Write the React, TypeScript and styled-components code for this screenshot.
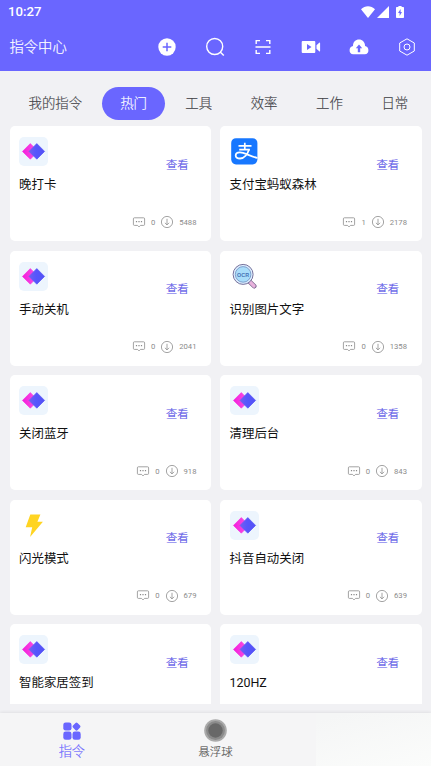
import React from 'react';
import styled, { createGlobalStyle, css } from 'styled-components';

const Global = createGlobalStyle`
  * { box-sizing: border-box; }
  body { margin: 0; background: #f1f1f4; font-family: Roboto, "Noto Sans CJK SC", sans-serif; }
  svg { display: block; flex: none; overflow: visible; }
`;

const purple = '#6a66ff';

const Screen = styled.div`
  width: 431px;
  height: 766px;
  overflow: hidden;
  display: flex;
  flex-direction: column;
  background: #f1f1f4;
`;

const Header = styled.header`
  height: 71px;
  flex: none;
  background: ${purple};
  color: #fff;
`;

const StatusBar = styled.div`
  height: 24px;
  display: flex;
  align-items: center;
  justify-content: space-between;
  padding: 0 27px 0 8px;
`;

const Clock = styled.span`
  font-size: 13.2px;
  font-weight: 500;
  line-height: 24px;
`;

const StatusIcons = styled.div`
  display: flex;
  align-items: center;
  padding-bottom: 1px;
`;

const Toolbar = styled.div`
  height: 46px;
  display: flex;
  align-items: center;
  justify-content: space-between;
  padding: 0 0 0 9.5px;
`;

const Heading = styled.h1`
  margin: 0;
  font-size: 14.3px;
  font-weight: 300;
  line-height: 20px;
  -webkit-text-stroke: 0.2px currentColor;
`;

const Actions = styled.div`
  display: flex;
  align-items: center;
`;

const Action = styled.button`
  width: 48px;
  height: 32px;
  padding: 0;
  border: 0;
  background: none;
  color: #fff;
  display: flex;
  align-items: center;
  justify-content: center;
`;

const Tabs = styled.nav`
  height: 55px;
  flex: none;
  display: flex;
  align-items: flex-start;
  padding: 16px 0 0 9.3px;
  overflow: hidden;
`;

const Tab = styled.span<{ $active?: boolean }>`
  height: 33px;
  line-height: 34px;
  flex: none;
  padding: 0 19.3px;
  font-size: 13.4px;
  font-weight: 300;
  color: #444449;
  -webkit-text-stroke: 0.15px currentColor;
  white-space: nowrap;
  ${p => p.$active && css`
    color: #fff;
    background: ${purple};
    border-radius: 17px;
    padding: 0 18.5px;
    margin: 0 0.6px 0 0.2px;
  `}
`;

const Grid = styled.main`
  height: 578px;
  flex: none;
  overflow: hidden;
  display: grid;
  grid-template-columns: 201.5px 201.5px;
  grid-auto-rows: 115px;
  gap: 9.5px 9px;
  padding: 0 9.5px;
`;

const Card = styled.article`
  background: #fff;
  border-radius: 5px;
  padding: 11px 14.5px 12.4px 9.5px;
  display: flex;
  flex-direction: column;
`;

const CardTop = styled.div`
  height: 55px;
  display: flex;
  justify-content: space-between;
  align-items: center;
`;

const CardInfo = styled.div`
  height: 55px;
  display: flex;
  flex-direction: column;
`;

const CardTitle = styled.h2`
  margin: 10px 0 0;
  font-size: 12.45px;
  font-weight: 400;
  line-height: 18px;
  color: #111;
  white-space: nowrap;
`;

const ViewLink = styled.span`
  font-size: 11.3px;
  font-weight: 300;
  line-height: 16px;
  color: #5550e6;
  margin-right: 8px;
  padding-top: 2px;
  -webkit-text-stroke: 0.2px currentColor;
`;

const Stats = styled.div`
  margin-top: auto;
  height: 13px;
  display: flex;
  align-items: center;
  justify-content: flex-end;
  gap: 6px;
  font-size: 7.7px;
  color: #8b8b8b;
`;

const BottomBar = styled.nav`
  height: 53.5px;
  margin-top: auto;
  flex: none;
  display: grid;
  grid-template-columns: repeat(3, 1fr);
  background: #f5f5f6;
  box-shadow: 0 -1px 3px rgba(0, 0, 0, 0.07);
`;

const BottomItem = styled.div<{ $active?: boolean }>`
  display: flex;
  flex-direction: column;
  align-items: center;
  padding-top: 7px;
  font-weight: 300;
  line-height: ${p => (p.$active ? '20px' : '21px')};
  font-size: ${p => (p.$active ? '13.2px' : '11.5px')};
  color: ${p => (p.$active ? purple : '#555')};
  -webkit-text-stroke: 0.15px currentColor;
`;

const BottomGlyph = styled.div`
  height: 22px;
  display: flex;
  align-items: center;
`;

const BottomFade = styled.div`
  margin-left: 29px;
  background: linear-gradient(165deg, #f5f6f6 10%, #fbfcfb);
`;

const Wifi = () => (
  <svg width="14" height="12" viewBox="0 0 14 12"><path d="M0 3.2C4-.8 10-.8 14 3.2L7 12Z" fill="#fff" /></svg>
);
const Signal = () => (
  <svg width="12" height="12" viewBox="0 0 12 12"><path d="M0 12 12 0V12Z" fill="#fff" /></svg>
);
const Battery = () => (
  <svg width="8" height="12" viewBox="0 0 8 12">
    <path d="M.8 1H2.4V0h3.2v1h1.6q.8 0 .8.8v9.4q0 .8-.8.8H.8Q0 12 0 11.2V1.8Q0 1 .8 1Z" fill="#fff" />
    <path d="M4.6 3 2 7h1.6v3L6 6H4.6Z" fill={purple} />
  </svg>
);
const StatusGap = styled.i<{ $w: number }>`
  width: ${p => p.$w}px;
`;

const PlusIcon = () => (
  <svg width="18" height="18" viewBox="0 0 18 18">
    <circle cx="9" cy="9" r="8.7" fill="#fff" />
    <path d="M9 4.7v8.6M4.7 9h8.6" stroke={purple} strokeWidth="1.5" />
  </svg>
);
const SearchIcon = () => (
  <svg width="20" height="20" viewBox="0 0 20 20" fill="none" stroke="#fff" strokeWidth="1.4">
    <circle cx="9.7" cy="9.5" r="8" /><path d="m15.2 15 3.6 3.6" />
  </svg>
);
const ScanIcon = () => (
  <svg width="16" height="16" viewBox="0 0 16 16" fill="none" stroke="#fff" strokeWidth="1.4">
    <path d="M1.2 5V1.6H5M11 1.6h3.8V5M1.2 11v3.4H5M11 14.4h3.8V11M.5 8h15" />
  </svg>
);
const VideoIcon = () => (
  <svg width="20" height="14" viewBox="0 0 20 14">
    <path d="M1.7 1h11.6q1 0 1 1v10q0 1-1 1H1.7q-1 0-1-1V2q0-1 1-1ZM15.5 5.3l2.7-2.5q.9-.6.9.5v7.4q0 1.1-.9.5l-2.7-2.5Z" fill="#fff" />
    <path d="m6 4 4.5 3L6 10Z" fill={purple} />
  </svg>
);
const CloudIcon = () => (
  <svg width="20" height="16" viewBox="0 0 20 16">
    <path d="M4.3 15.3A4.1 4.1 0 0 1 .6 11c0-2.4 1.6-3.8 3.4-4.1C4 3 6.6.6 10 .6s6 2.5 6.1 6.3c1.8.3 3.3 1.8 3.3 4.1a4.1 4.1 0 0 1-3.7 4.3Z" fill="#fff" />
    <path d="m10 5.6 3.2 3.7h-2v4H8.8v-4h-2Z" fill={purple} />
  </svg>
);
const SettingsIcon = () => (
  <svg width="18" height="18" viewBox="0 0 18 18" fill="none" stroke="#fff" strokeWidth="1" strokeLinejoin="round">
    <path d="M9 .8 16.3 5v8L9 17.2 1.7 13V5Z" /><circle cx="9" cy="9" r="3" />
  </svg>
);

const DiamondsIcon = () => (
  <svg width="29" height="29" viewBox="0 0 29 29">
    <defs>
      <linearGradient id="pinkFade"><stop offset="0" stopColor="#f51ddd" /><stop offset="1" stopColor="#f65be2" /></linearGradient>
      <linearGradient id="blueFade"><stop offset="0" stopColor="#7060ef" /><stop offset=".45" stopColor="#5755fc" /><stop offset="1" stopColor="#5452f5" /></linearGradient>
    </defs>
    <rect width="29" height="29" rx="5" fill="#edf5fd" />
    <path d="m11.3 6.6 7.8 7.8-7.8 7.8-7.8-7.8Z" fill="url(#pinkFade)" stroke="url(#pinkFade)" strokeWidth=".7" strokeLinejoin="round" />
    <path d="m17.8 6.6 7.8 7.8-7.8 7.8-7.8-7.8Z" fill="url(#blueFade)" stroke="url(#blueFade)" strokeWidth=".7" strokeLinejoin="round" />
  </svg>
);
const PayIcon = () => (
  <svg width="29" height="29" viewBox="0 0 29 29">
    <rect x="1.2" y="1.2" width="26.2" height="26.2" rx="4.8" fill="#1777ff" />
    <g fill="none" stroke="#fff">
      <path d="M8.5 8.8h13M14.8 5.8v6.5M9.2 12.6h10.6" strokeWidth="1.7" />
      <path d="M19.1 12.3c-1.4 4.6-4.8 9.2-9.1 9.2-2.7 0-4.3-1.2-4.3-3 0-2 1.8-3.1 4.2-3.1 4.5 0 8.7 3.3 17.5 5.6" strokeWidth="1.8" />
    </g>
  </svg>
);
const OcrText = styled.text`
  font: 700 6px "Liberation Sans", sans-serif;
  fill: #4772b5;
`;
const OcrIcon = () => (
  <svg width="29" height="29" viewBox="0 0 29 29">
    <path d="m18.8 18.8 5.4 5.4" stroke="#74608b" strokeWidth="4.6" strokeLinecap="round" />
    <path d="m20 20 4 4" stroke="#e8b2dc" strokeWidth="3.2" strokeLinecap="round" />
    <circle cx="13.1" cy="12.4" r="10" fill="#dceeff" stroke="#77729c" strokeWidth="1" />
    <circle cx="13.1" cy="12.4" r="7.8" fill="#a9ddfa" stroke="#718fc0" strokeWidth=".8" />
    <OcrText x="13.1" y="14.6" textAnchor="middle" textLength="12" lengthAdjust="spacingAndGlyphs">OCR</OcrText>
  </svg>
);
const BoltIcon = () => (
  <svg width="29" height="29" viewBox="0 0 29 29">
    <path d="M11.3 3.4h10.1l-3 7.3h5.5L11.1 26l2.1-9.7H6.7Z" fill="#ffd422" />
  </svg>
);

const CommentIcon = () => (
  <svg width="12" height="11" viewBox="0 0 12 11" fill="none" stroke="#8b8b8b" strokeWidth=".8">
    <path d="M1.4.8h9.2q1 0 1 1v5.6q0 1-1 1H7.5L6 9.9 4.5 8.4H1.4q-1 0-1-1V1.8q0-1 1-1Z" />
    <path d="M2.9 4.6h1.2M5.4 4.6h1.2M7.9 4.6h1.2" strokeWidth="1.1" />
  </svg>
);
const DownloadIcon = () => (
  <svg width="12" height="12" viewBox="0 0 12 12" fill="none" stroke="#858585" strokeWidth=".75">
    <circle cx="6" cy="6" r="5.6" /><path d="M6 2.8v6M3.9 6.8 6 8.9l2.1-2.1" />
  </svg>
);

const CommandsIcon = () => (
  <svg width="18" height="18" viewBox="0 0 18 18" fill={purple}>
    <rect x=".3" y=".4" width="8.2" height="8.2" rx="2.4" />
    <rect x="10.3" y="1.4" width="6.4" height="6.4" rx="1.4" transform="rotate(45 13.5 4.6)" />
    <rect x=".3" y="9.6" width="8.2" height="8.2" rx="2.4" />
    <rect x="9.5" y="9.6" width="8.2" height="8.2" rx="2.4" />
  </svg>
);
const BallIcon = () => (
  <svg width="23" height="23" viewBox="0 0 23 23">
    <circle cx="11.5" cy="11.5" r="11.3" fill="#aaa" />
    <circle cx="11.5" cy="11.5" r="9.4" fill="#8b8b8b" />
    <circle cx="11.5" cy="11.5" r="7.2" fill="#686868" />
  </svg>
);

const icons = { diamonds: DiamondsIcon, pay: PayIcon, ocr: OcrIcon, bolt: BoltIcon };

type Command = { title: string; icon: keyof typeof icons; comments: number; downloads: number };

const commands: Command[] = [
  { title: '晚打卡', icon: 'diamonds', comments: 0, downloads: 5488 },
  { title: '支付宝蚂蚁森林', icon: 'pay', comments: 1, downloads: 2178 },
  { title: '手动关机', icon: 'diamonds', comments: 0, downloads: 2041 },
  { title: '识别图片文字', icon: 'ocr', comments: 0, downloads: 1358 },
  { title: '关闭蓝牙', icon: 'diamonds', comments: 0, downloads: 918 },
  { title: '清理后台', icon: 'diamonds', comments: 0, downloads: 843 },
  { title: '闪光模式', icon: 'bolt', comments: 0, downloads: 679 },
  { title: '抖音自动关闭', icon: 'diamonds', comments: 0, downloads: 639 },
];
const lastRow = ['智能家居签到', '120HZ'];

const CommandCard = ({ title, icon, children }: { title: string; icon: keyof typeof icons; children?: React.ReactNode }) => {
  const Icon = icons[icon];
  return (
    <Card>
      <CardTop>
        <CardInfo>
          <Icon />
          <CardTitle>{title}</CardTitle>
        </CardInfo>
        <ViewLink>查看</ViewLink>
      </CardTop>
      {children}
    </Card>
  );
};

export default function App() {
  return (
    <>
      <Global />
      <Screen>
        <Header>
          <StatusBar>
            <Clock>10:27</Clock>
            <StatusIcons>
              <Wifi /><StatusGap $w={2} /><Signal /><StatusGap $w={7} /><Battery />
            </StatusIcons>
          </StatusBar>
          <Toolbar>
            <Heading>指令中心</Heading>
            <Actions>
              {[PlusIcon, SearchIcon, ScanIcon, VideoIcon, CloudIcon, SettingsIcon].map((Icon, i) => (
                <Action key={i}><Icon /></Action>
              ))}
            </Actions>
          </Toolbar>
        </Header>
        <Tabs>
          {['我的指令', '热门', '工具', '效率', '工作', '日常'].map(label => (
            <Tab key={label} $active={label === '热门'}>{label}</Tab>
          ))}
        </Tabs>
        <Grid>
          {commands.map(c => (
            <CommandCard key={c.title} title={c.title} icon={c.icon}>
              <Stats>
                <CommentIcon /><span>{c.comments}</span><DownloadIcon /><span>{c.downloads}</span>
              </Stats>
            </CommandCard>
          ))}
          {lastRow.map(title => <CommandCard key={title} title={title} icon="diamonds" />)}
        </Grid>
        <BottomBar>
          <BottomItem $active><BottomGlyph><CommandsIcon /></BottomGlyph>指令</BottomItem>
          <BottomItem><BottomGlyph><BallIcon /></BottomGlyph>悬浮球</BottomItem>
          <BottomFade />
        </BottomBar>
      </Screen>
    </>
  );
}
